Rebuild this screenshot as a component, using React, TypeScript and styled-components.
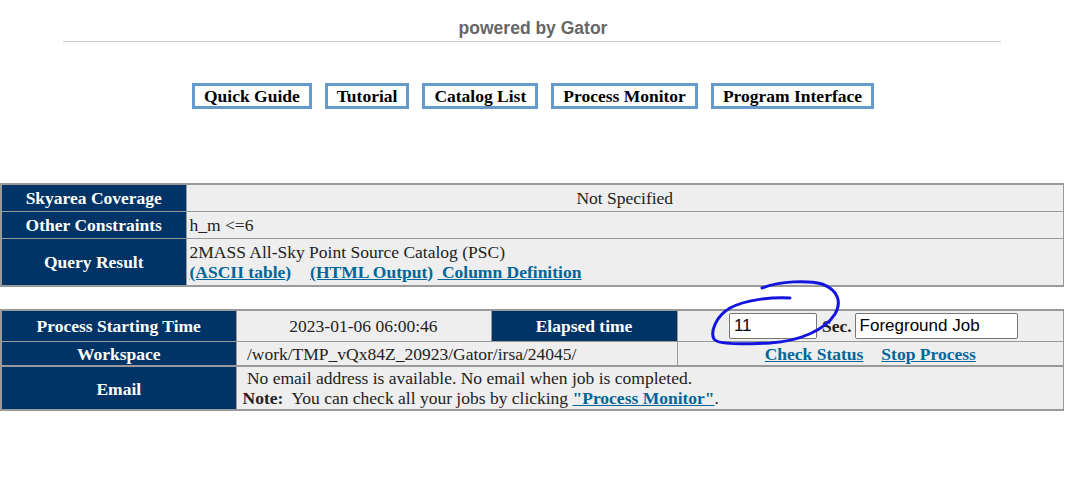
import React from "react";
import styled, { createGlobalStyle } from "styled-components";

const Global = createGlobalStyle`
  html, body { margin: 0; padding: 0; background: #ffffff; }
  body { font-family: "Liberation Serif", "Times New Roman", serif; font-size: 17.5px; color: #222; }
`;

const Page = styled.div`
  position: relative;
  width: 1066px;
  padding-top: 18px;
`;

const Powered = styled.div`
  text-align: center;
  font-family: "Liberation Sans", Arial, sans-serif;
  font-weight: bold;
  font-size: 17.5px;
  line-height: 20px;
  color: #666666;
`;

const Rule = styled.div`
  margin: 3px 65px 0 63px;
  height: 1px;
  background: #cccccc;
`;

const NavBar = styled.div`
  margin-top: 41px;
  display: flex;
  justify-content: center;
  gap: 13px;
`;

const NavButton = styled.button`
  font-family: "Liberation Serif", "Times New Roman", serif;
  font-weight: bold;
  font-size: 17.5px;
  line-height: 20px;
  color: #000;
  background: #ffffff;
  border: 3px solid #6699cc;
  padding: 0 9px;
  margin: 0;
  cursor: pointer;
`;

const Table = styled.table<{ $top: number }>`
  margin: ${(p) => p.$top}px 0 0 0;
  width: 1064px;
  border-collapse: collapse;
  table-layout: fixed;
  border-top: 2px solid #999999;
  border-left: 2px solid #999999;
  border-bottom: 2px solid #999999;
  border-right: 1px solid #999999;
`;

const Label = styled.th<{ $pad?: string }>`
  background: #003366;
  color: #ffffff;
  font-weight: bold;
  font-size: 17.5px;
  line-height: 20px;
  text-align: center;
  padding: ${(p) => p.$pad ?? "3px 3px"};
  border: 1px solid #999999;
`;

const Value = styled.td<{ $align?: string; $pad?: string }>`
  background: #eeeeee;
  color: #222222;
  font-size: 17.5px;
  line-height: 20px;
  text-align: ${(p) => p.$align ?? "left"};
  padding: ${(p) => p.$pad ?? "3px 3px"};
  border: 1px solid #999999;
  white-space: nowrap;
`;

const Row = styled.tr<{ $thick?: boolean }>`
  ${(p) => (p.$thick ? "& > * { border-top: 2px solid #999999; }" : "")}
`;

const LinkGroup = styled.b`
  color: #006699;
  font-weight: bold;
`;

const Link = styled.a`
  color: #006699;
  font-weight: bold;
  text-decoration: underline;
`;

const Field = styled.input<{ $w: number }>`
  box-sizing: border-box;
  width: ${(p) => p.$w}px;
  height: 26px;
  font-family: "Liberation Sans", Arial, sans-serif;
  font-size: 17px;
  color: #000;
  background: #fff;
  border: 1px solid #767676;
  border-radius: 2px;
  padding: 1px 4px;
  vertical-align: middle;
`;

const Bold = styled.b`
  font-weight: bold;
`;

const SecLabel = styled.b`
  font-weight: bold;
  margin: 0 3px 0 5px;
  vertical-align: middle;
`;

const LinkGap = styled.span<{ $w: number }>`
  display: inline-block;
  width: ${(p) => p.$w}px;
`;

const Annotation = styled.svg`
  position: absolute;
  left: 0;
  top: 0;
  width: 1079px;
  height: 490px;
  pointer-events: none;
  overflow: visible;
`;

export default function App() {
  return (
    <>
      <Global />
      <Page>
        <Powered>powered by Gator</Powered>
        <Rule />
        <NavBar>
          <NavButton>Quick Guide</NavButton>
          <NavButton>Tutorial</NavButton>
          <NavButton>Catalog List</NavButton>
          <NavButton>Process Monitor</NavButton>
          <NavButton>Program Interface</NavButton>
        </NavBar>

        <Table $top={74}>
          <colgroup>
            <col style={{ width: 185 }} />
            <col />
          </colgroup>
          <tbody>
            <tr>
              <Label>Skyarea Coverage</Label>
              <Value $align="center">Not Specified</Value>
            </tr>
            <tr>
              <Label>Other Constraints</Label>
              <Value>h_m &lt;=6</Value>
            </tr>
            <tr>
              <Label>Query Result</Label>
              <Value>
                2MASS All-Sky Point Source Catalog (PSC)
                <br />
                <LinkGroup>
                  <Link href="#">(ASCII table</Link>)
                </LinkGroup>
                <LinkGap $w={19} />
                <LinkGroup>
                  <Link href="#">(HTML Output</Link>)
                </LinkGroup>{" "}
                <Link href="#">&nbsp;Column Definition</Link>
              </Value>
            </tr>
          </tbody>
        </Table>

        <Table $top={22}>
          <colgroup>
            <col style={{ width: 235 }} />
            <col style={{ width: 255 }} />
            <col style={{ width: 186 }} />
            <col />
          </colgroup>
          <tbody>
            <tr>
              <Label $pad="2px 3px">Process Starting Time</Label>
              <Value $align="center" $pad="2px 3px">2023-01-06 06:00:46</Value>
              <Label $pad="2px 3px">Elapsed time</Label>
              <Value $align="center" $pad="2px 3px 2px 9px">
                <Field $w={88} defaultValue="11" readOnly />
                <SecLabel>Sec.</SecLabel>
                <Field $w={163} defaultValue="Foreground Job" readOnly />
              </Value>
            </tr>
            <tr>
              <Label $pad="2px 3px 1px">Workspace</Label>
              <Value colSpan={2} $pad="2px 6px 1px">
                &nbsp;/work/TMP_vQx84Z_20923/Gator/irsa/24045/
              </Value>
              <Value $align="center" $pad="2px 6px 1px">
                <Link href="#">Check Status</Link>
                <LinkGap $w={18} />
                <Link href="#">Stop Process</Link>
              </Value>
            </tr>
            <Row $thick>
              <Label $pad="2px 3px 1px">Email</Label>
              <Value colSpan={3} $pad="1px 6px 1px">
                &nbsp;No email address is available. No email when job is completed.
                <br />
                <Bold>Note:</Bold>&nbsp; You can check all your jobs by clicking{" "}
                <Link href="#">"Process Monitor"</Link>.
              </Value>
            </Row>
          </tbody>
        </Table>

        <Annotation viewBox="0 0 1079 490">
          <path
            d="M790 298 C770 297 745 300 730 308 C716 316 710 332 714 339 C718 345 745 344 770 343 C800 341 825 330 835 314 C842 302 838 290 822 284 C808 280 780 281 762 288"
            fill="none"
            stroke="#1414e0"
            strokeWidth={3}
            strokeLinecap="round"
            strokeLinejoin="round"
          />
        </Annotation>
      </Page>
    </>
  );
}
